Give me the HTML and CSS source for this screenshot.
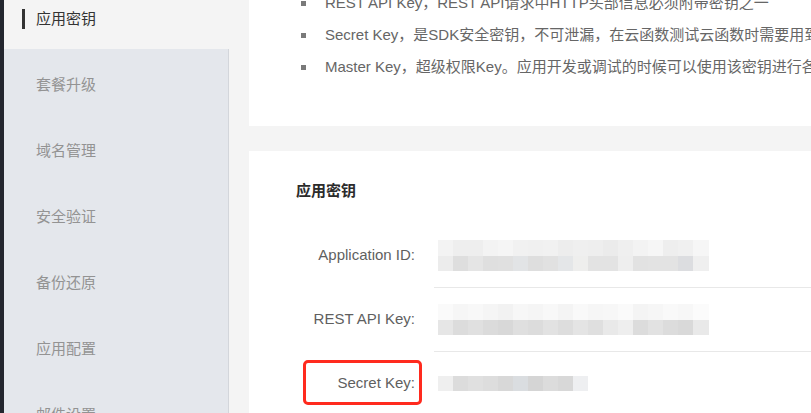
FILE: index.html
```html
<!DOCTYPE html>
<html lang="zh-CN">
<head>
<meta charset="utf-8">
<title>应用密钥</title>
<link rel="stylesheet" href="styles.css">
</head>
<body>
<div class="strip"></div>
<nav class="sidebar">
  <div class="nav-item active">应用密钥</div>
  <div class="nav-item">套餐升级</div>
  <div class="nav-item">域名管理</div>
  <div class="nav-item">安全验证</div>
  <div class="nav-item">备份还原</div>
  <div class="nav-item">应用配置</div>
  <div class="nav-item">邮件设置</div>
</nav>
<main class="main">
  <section class="card card-notes">
    <ul class="notes">
      <li>REST API Key，REST API请求中HTTP头部信息必须附带密钥之一</li>
      <li>Secret Key，是SDK安全密钥，不可泄漏，在云函数测试云函数时需要用到</li>
      <li>Master Key，超级权限Key。应用开发或调试的时候可以使用该密钥进行各种权限的操作</li>
    </ul>
  </section>
  <section class="card card-keys">
    <h2 class="card-title">应用密钥</h2>
    <div class="key-row">
      <div class="key-label">Application ID:</div>
      <div class="key-value first">
        <div class="mosaic">
          <div class="m-row m-app-top"></div>
          <div class="m-row m-app-bot"></div>
        </div>
      </div>
    </div>
    <div class="key-row">
      <div class="key-label">REST API Key:</div>
      <div class="key-value">
        <div class="mosaic">
          <div class="m-row m-rest-top"></div>
          <div class="m-row m-rest-bot"></div>
        </div>
      </div>
    </div>
    <div class="key-row">
      <div class="key-label">Secret Key:<span class="annot"></span></div>
      <div class="key-value">
        <div class="mosaic short">
          <div class="m-row m-secret"></div>
        </div>
      </div>
    </div>
  </section>
</main>
</body>
</html>
```
FILE: styles.css
```css
html, body {
  margin: 0;
  padding: 0;
}
body {
  width: 811px;
  height: 413px;
  overflow: hidden;
  display: flex;
  font-family: "Liberation Sans", "Noto Sans CJK SC", sans-serif;
  font-size: 15px;
  background: #f4f4f4;
}
.strip {
  width: 4px;
  flex: none;
  background: #23262e;
}
.sidebar {
  width: 224px;
  flex: none;
  background: #e4e7ec;
  border-right: 1px solid #d3d6db;
  display: flex;
  flex-direction: column;
}
.nav-item {
  height: 66px;
  flex: none;
  line-height: 66px;
  padding-left: 32px;
  color: #939393;
  white-space: nowrap;
}
.nav-item.active {
  position: relative;
  height: 63px;
  margin-top: -14px;
  margin-bottom: 3px;
  margin-right: -1px;
  background: #f4f4f4;
  color: #333;
}
.nav-item.active::before {
  content: "";
  position: absolute;
  left: 18px;
  top: 23px;
  width: 3px;
  height: 20px;
  background: #333;
}
.main {
  flex: 1;
  min-width: 0;
  padding-left: 20px;
  background: #f4f4f4;
}
.card {
  background: #fff;
}
.card-notes {
  height: 126px;
  overflow: hidden;
}
.notes {
  list-style: none;
  margin: -13px 0 0 0;
  padding: 0 0 0 52px;
  color: #666;
  white-space: nowrap;
}
.notes li {
  position: relative;
  height: 32px;
  line-height: 32px;
  padding-left: 24px;
}
.notes li::before {
  content: "";
  position: absolute;
  left: 0;
  top: 14px;
  width: 5px;
  height: 5px;
  background: #7a7a7a;
}
.card-keys {
  margin-top: 25px;
  padding: 30px 0 0 47px;
}
.card-title {
  margin: 0 0 22px 0;
  font-size: 15px;
  line-height: 20px;
  font-weight: bold;
  color: #2b2b2b;
}
.key-row {
  display: flex;
  height: 64px;
}
.key-label {
  position: relative;
  width: 119px;
  flex: none;
  text-align: right;
  line-height: 64px;
  color: #5f5f5f;
  white-space: nowrap;
}
.annot {
  position: absolute;
  left: 7px;
  right: -7px;
  top: 9px;
  height: 45px;
  box-sizing: border-box;
  border: 3px solid #ff2a1e;
  border-radius: 5px;
}
.key-value {
  flex: 1;
  margin-left: 19px;
  border-top: 1px solid #e8e8e8;
  display: flex;
  align-items: center;
  padding-left: 4px;
}
.key-value.first {
  border-top-color: transparent;
}
.mosaic {
  width: 271px;
  display: flex;
  flex-direction: column;
}
.mosaic.short {
  width: 150px;
}
.m-row {
  height: 15.5px;
}
.m-app-top {
  background: linear-gradient(90deg,
    #f3f3f3 0 15px, #eeeeee 15px 30px, #eeeeee 30px 45px, #f3f3f3 45px 60px,
    #f5f5f5 60px 75px, #f1f1f1 75px 90px, #f0f0f0 90px 105px, #f1f1f1 105px 120px,
    #ededed 120px 135px, #efefef 135px 150px, #eeeeee 150px 165px, #ebebeb 165px 180px,
    #efefef 180px 195px, #f3f3f3 195px 210px, #f6f6f6 210px 225px, #eeeeee 225px 240px,
    #f0f0f0 240px 255px, #f6f6f6 255px 271px);
}
.m-app-bot {
  background: linear-gradient(90deg,
    #ececec 0 15px, #dedede 15px 30px, #e5e5e5 30px 45px, #dfdfdf 45px 60px,
    #e0e0e0 60px 75px, #e2e4e6 75px 90px, #dedede 90px 105px, #e1e1e1 105px 120px,
    #e4e6e8 120px 135px, #eeeeed 135px 150px, #e3e3e3 150px 165px, #e3e3e3 165px 180px,
    #eeeeee 180px 195px, #e2e2e2 195px 210px, #e3e3e3 210px 225px, #e3e3e3 225px 240px,
    #dcdde0 240px 255px, #efefef 255px 271px);
}
.m-rest-top {
  background: linear-gradient(90deg,
    #fafafa 0 15px, #f6f6f6 15px 30px, #f8f8f8 30px 45px, #f5f5f5 45px 60px,
    #f2f2f2 60px 75px, #f7f7f7 75px 90px, #f5f5f5 90px 105px, #f8f8f8 105px 120px,
    #f4f4f4 120px 135px, #f9f9f9 135px 150px, #f6f6f6 150px 165px, #f7f7f7 165px 180px,
    #fafafa 180px 195px, #f4f4f4 195px 210px, #f6f6f6 210px 225px, #f9f9f9 225px 240px,
    #f7f7f7 240px 255px, #fbfbfb 255px 271px);
}
.m-rest-bot {
  background: linear-gradient(90deg,
    #e6e6e6 0 15px, #dcdcdc 15px 30px, #e0e0e0 30px 45px, #dbdbdb 45px 60px,
    #d8d8d8 60px 75px, #dfdfdf 75px 90px, #dcdcdc 90px 105px, #e2e2e2 105px 120px,
    #dddddd 120px 135px, #e4e4e4 135px 150px, #dfdfdf 150px 165px, #e9e9e9 165px 180px,
    #eeeeee 180px 195px, #dcdcdc 195px 210px, #e2e2e2 210px 225px, #dcdcdc 225px 240px,
    #d9d9d9 240px 255px, #e9e9e9 255px 271px);
}
.m-secret {
  background: linear-gradient(90deg,
    #efefef 0 15px, #dcdcdc 15px 30px, #e0e0e0 30px 45px, #dddddd 45px 60px,
    #d8d8d8 60px 75px, #dadde0 75px 90px, #d5d5d5 90px 105px, #dcdcdc 105px 120px,
    #d8d8d8 120px 135px, #eeeff1 135px 150px);
}
```
